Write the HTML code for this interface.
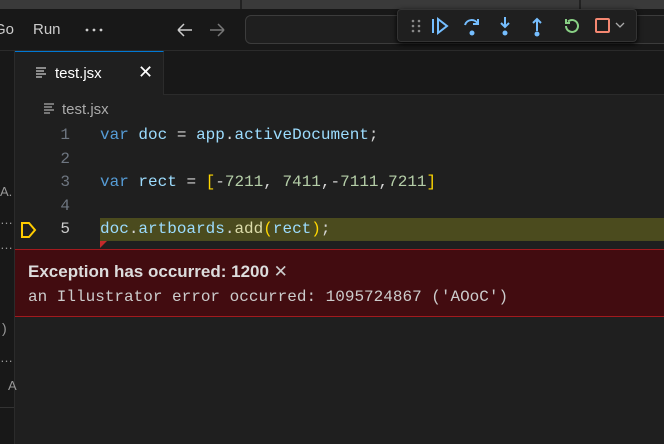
<!DOCTYPE html>
<html><head><style>
*{margin:0;padding:0;box-sizing:border-box}
body{width:664px;height:444px;overflow:hidden;background:#1f1f1f;position:relative;font-family:"Liberation Sans",sans-serif;color:#ccc}
.abs{position:absolute}
.mono{font-family:"Liberation Mono",monospace;font-size:16px;white-space:pre}
.kw{color:#569cd6}.id{color:#9cdcfe}.fn{color:#dcdcaa}.num{color:#b5cea8}.br{color:#ffd700}.p{color:#d4d4d4}.ln{color:#6e7681}
</style></head><body>
<div class="abs" style="left:0;top:0;width:664px;height:9px;background:#3a3a3a"></div>
<div class="abs" style="left:240px;top:0;width:2px;height:9px;background:#222"></div>
<div class="abs" style="left:579px;top:0;width:2px;height:9px;background:#222"></div>
<div class="abs" style="left:0;top:9px;width:664px;height:42px;background:#181818;border-bottom:1px solid #2b2b2b"></div>
<div class="abs" style="left:-6px;top:21px;font-size:15px;color:#ccc">Go</div>
<div class="abs" style="left:33px;top:21px;font-size:15px;color:#ccc">Run</div>
<svg class="abs" style="left:85px;top:28px" width="20" height="4"><g fill="#ccc"><circle cx="2" cy="2" r="1.4"/><circle cx="9" cy="2" r="1.4"/><circle cx="16" cy="2" r="1.4"/></g></svg>
<svg class="abs" style="left:176px;top:22px" width="50" height="16"><g fill="none" stroke-width="1.5"><path d="M2 8h14M2 8l6-6M2 8l6 6" stroke="#ccc"/><path d="M34 8h14M48 8l-6-6M48 8l-6 6" stroke="#777"/></g></svg>
<div class="abs" style="left:245px;top:15px;width:430px;height:29px;border:1px solid #3c3c3c;border-radius:6px;background:#1f1f1f"></div>
<div class="abs" style="left:397px;top:9px;width:240px;height:33px;background:#1f1f1f;border:1px solid #333;border-radius:4px;box-shadow:0 2px 6px #000">
<svg width="240" height="33" viewBox="0 0 240 33">
<g fill="#888"><circle cx="15" cy="11" r="1.3"/><circle cx="21" cy="11" r="1.3"/><circle cx="15" cy="16" r="1.3"/><circle cx="21" cy="16" r="1.3"/><circle cx="15" cy="21" r="1.3"/><circle cx="21" cy="21" r="1.3"/></g>
<g stroke="#75beff" stroke-width="2" fill="none">
<path d="M35 9v14M40 9l9 7-9 7z"/>
<path d="M67 15a7 7 0 0 1 13 -1M80 9v5h-5"/>
<path d="M107 7v10M103 13l4 4 4-4"/>
<path d="M139 21V9M135 13l4-4 4 4"/>
</g>
<g fill="#75beff"><circle cx="74" cy="23" r="2.5"/><circle cx="107" cy="23" r="2.5"/><circle cx="139" cy="24" r="2.5"/></g>
<path d="M168 16a6 6 0 1 0 2-4.5M168 9v4h4" stroke="#89d185" stroke-width="2" fill="none"/>
<rect x="198" y="9" width="13" height="13" rx="1" stroke="#f48771" stroke-width="2" fill="none"/>
<path d="M218 13l4 4 4-4" stroke="#aaa" stroke-width="1.3" fill="none"/>
</svg></div>
<div class="abs" style="left:0;top:51px;width:15px;height:393px;background:#181818;border-right:1px solid #2b2b2b"></div>
<div class="abs" style="left:0;top:184px;font-size:13px;color:#999">A.</div>
<div class="abs" style="left:0;top:212px;font-size:13px;color:#999">…</div>
<div class="abs" style="left:0;top:237px;font-size:13px;color:#999">…</div>
<div class="abs" style="left:2px;top:320px;font-size:14px;color:#999">)</div>
<div class="abs" style="left:0;top:350px;font-size:13px;color:#999">…</div>
<div class="abs" style="left:8px;top:378px;font-size:13px;color:#999">A</div>
<div class="abs" style="left:0;top:407px;width:14px;height:1px;background:#333"></div>
<div class="abs" style="left:164px;top:51px;width:500px;height:44px;background:#181818;border-bottom:1px solid #2b2b2b"></div>
<div class="abs" style="left:15px;top:51px;width:149px;height:44px;background:#1f1f1f;border-top:1px solid #0078d4;border-right:1px solid #2b2b2b"></div>
<svg class="abs" style="left:36px;top:67px" width="12" height="12"><g stroke="#ccc" stroke-width="1.3"><path d="M0 1h10M0 4h8M0 7h10M0 10h6"/></g></svg>
<div class="abs" style="left:55px;top:65px;font-size:15px;color:#fff">test.jsx</div>
<div class="abs" style="left:138px;top:62px;font-size:18px;color:#fff">✕</div>
<svg class="abs" style="left:44px;top:103px" width="12" height="12"><g stroke="#aaa" stroke-width="1.3"><path d="M0 1h10M0 4h8M0 7h10M0 10h6"/></g></svg>
<div class="abs" style="left:62px;top:101px;font-size:15px;color:#aaa">test.jsx</div>
<div class="abs" style="left:100px;top:218px;width:564px;height:23px;background:#4b4b1e"></div>
<div class="abs" style="left:100px;top:241px;width:0;height:0;border-top:7px solid #c42b2b;border-right:7px solid transparent"></div>
<div class="abs" style="left:15px;top:249px;width:649px;height:68px;background:#420c10;border-top:1px solid #a31a1e;border-bottom:1px solid #a31a1e"></div>
<div class="abs" style="left:28px;top:262px;font-size:17px;font-weight:bold;color:#ddd">Exception has occurred: 1200 <span style="font-weight:normal;color:#ccc">✕</span></div>
<div class="abs mono" style="left:28px;top:288px;color:#ccc">an Illustrator error occurred: 1095724867 ('AOoC')</div>
<svg class="abs" style="left:20px;top:221px" width="18" height="18"><path d="M2 2h7l6 7-6 7H2z" stroke="#ffcc00" stroke-width="2" fill="none"/></svg>
<div class="abs mono" style="left:40px;top:124px;line-height:23.5px;width:30px;text-align:right"><span class="ln">1
2
3
4
</span><span style="color:#ccc">5</span></div>
<div class="abs mono" style="left:100px;top:124px;line-height:23.5px"><span class="kw">var</span> <span class="id">doc</span> <span class="p">=</span> <span class="id">app</span><span class="p">.</span><span class="id">activeDocument</span><span class="p">;</span>

<span class="kw">var</span> <span class="id">rect</span> <span class="p">=</span> <span class="br">[</span><span class="p">-</span><span class="num">7211</span><span class="p">,</span> <span class="num">7411</span><span class="p">,-</span><span class="num">7111</span><span class="p">,</span><span class="num">7211</span><span class="br">]</span>

<span class="id">doc</span><span class="p">.</span><span class="id">artboards</span><span class="p">.</span><span class="fn">add</span><span class="br">(</span><span class="id">rect</span><span class="br">)</span><span class="p">;</span></div>
</body></html>
